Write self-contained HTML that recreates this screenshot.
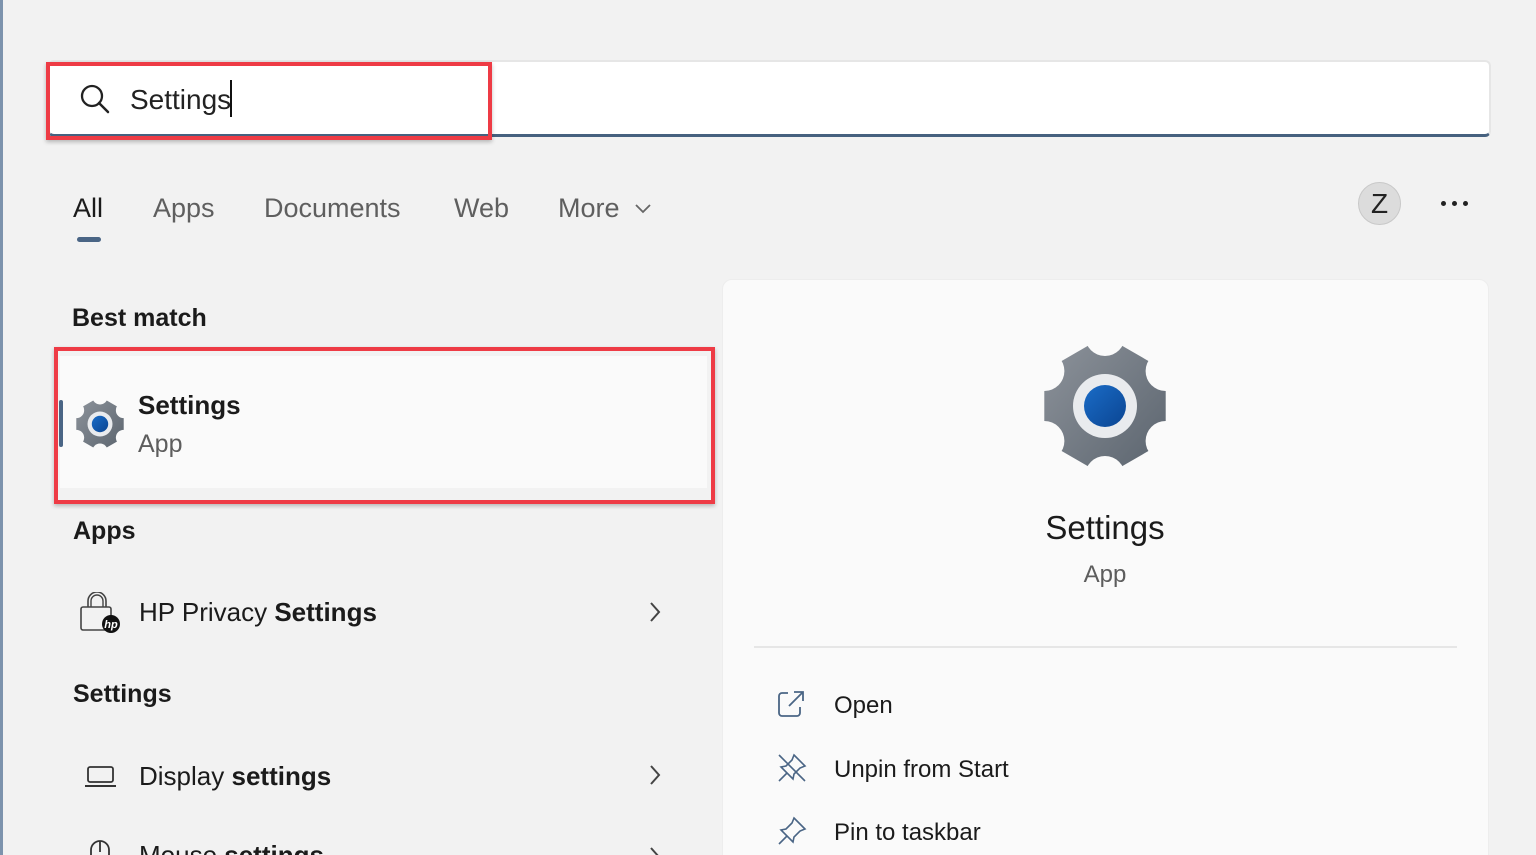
<!DOCTYPE html>
<html style="width:1536px;height:855px;overflow:hidden"><head><meta charset="utf-8"><style>
*{margin:0;padding:0;box-sizing:border-box}
body{width:1536px;height:855px;overflow:hidden;background:#f2f2f2;font-family:"Liberation Sans",sans-serif;color:#1b1b1b;position:relative}
.a{position:absolute;white-space:nowrap;line-height:1}
.b{font-weight:bold}
.g{color:#5d5d5d}
</style></head><body>
<div class="a" style="left:0;top:0;width:3px;height:855px;background:#7d93ad"></div>
<div class="a" style="left:48px;top:60px;width:1443px;height:77px;background:#fff;border:2px solid #e6e6e6;border-bottom:3px solid #46617f;border-radius:6px"></div>
<div class="a" style="left:46px;top:62px;width:446px;height:78px;border:4px solid #ee3b45;box-shadow:0 2px 4px rgba(0,0,0,.25)"></div>
<svg class="a" style="left:78px;top:82px" width="34" height="34" viewBox="0 0 34 34"><circle cx="14" cy="14" r="10" fill="none" stroke="#222" stroke-width="2.3"/><line x1="21" y1="21" x2="30" y2="30" stroke="#222" stroke-width="2.5" stroke-linecap="round"/></svg>
<div class="a" style="left:130px;top:86px;font-size:28px;color:#222">Settings</div>
<div class="a" style="left:230px;top:80px;width:2px;height:37px;background:#111"></div>
<div class="a" style="left:73px;top:195px;font-size:27px;color:#1b1b1b">All</div>
<div class="a" style="left:153px;top:195px;font-size:27px;color:#5f5f5f">Apps</div>
<div class="a" style="left:264px;top:195px;font-size:27px;color:#5f5f5f">Documents</div>
<div class="a" style="left:454px;top:195px;font-size:27px;color:#5f5f5f">Web</div>
<div class="a" style="left:558px;top:195px;font-size:27px;color:#5f5f5f">More</div>
<svg class="a" style="left:634px;top:202px" width="18" height="12"><polyline points="2,3 9,10 16,3" fill="none" stroke="#666" stroke-width="1.8"/></svg>
<div class="a" style="left:77px;top:237px;width:24px;height:5px;border-radius:3px;background:#4a6585"></div>
<div class="a" style="left:1358px;top:182px;width:43px;height:43px;border-radius:50%;background:#dcdcdc;border:1px solid #c8c8c8;font-size:28px;text-align:center;line-height:41px;color:#222">Z</div>
<div class="a" style="left:1441px;top:201px;width:28px;height:6px">
<span style="position:absolute;left:0;top:0;width:5px;height:5px;border-radius:50%;background:#222"></span>
<span style="position:absolute;left:11px;top:0;width:5px;height:5px;border-radius:50%;background:#222"></span>
<span style="position:absolute;left:22px;top:0;width:5px;height:5px;border-radius:50%;background:#222"></span></div>
<div class="a b" style="left:72px;top:306px;font-size:25px">Best match</div>
<div class="a" style="left:60px;top:356px;width:647px;height:132px;background:#fafafa"></div>
<div class="a" style="left:59px;top:400px;width:4px;height:47px;background:#4a6585;border-radius:2px"></div>
<svg class="a" style="left:75px;top:399px" width="50" height="50" viewBox="-64 -64 128 128">
<defs><mask id="m1"><rect x="-70" y="-70" width="140" height="140" fill="#fff"/>
<circle cx="0" cy="-70" r="20" fill="#000"/><circle cx="60.6" cy="-35" r="20" fill="#000"/><circle cx="60.6" cy="35" r="20" fill="#000"/><circle cx="0" cy="70" r="20" fill="#000"/><circle cx="-60.6" cy="35" r="20" fill="#000"/><circle cx="-60.6" cy="-35" r="20" fill="#000"/></mask>
<linearGradient id="gg" x1="0" y1="0" x2="1" y2="1"><stop offset="0" stop-color="#8b9199"/><stop offset="1" stop-color="#5d6670"/></linearGradient>
<linearGradient id="bb" x1="0" y1="0" x2="1" y2="1"><stop offset="0" stop-color="#1a6cc7"/><stop offset="1" stop-color="#0b4592"/></linearGradient></defs>
<path d="M0,-62 L53.7,-31 L53.7,31 L0,62 L-53.7,31 L-53.7,-31Z" fill="url(#gg)" stroke="url(#gg)" stroke-width="14" stroke-linejoin="round" mask="url(#m1)"/>
<circle r="32" fill="#e9ebee"/><circle r="21" fill="url(#bb)"/></svg>
<div class="a b" style="left:138px;top:392px;font-size:26px">Settings</div>
<div class="a g" style="left:138px;top:432px;font-size:25px">App</div>
<div class="a" style="left:54px;top:347px;width:661px;height:157px;border:4px solid #ee3b45;box-shadow:0 2px 4px rgba(0,0,0,.25)"></div>
<div class="a b" style="left:73px;top:519px;font-size:25px">Apps</div>
<svg class="a" style="left:78px;top:592px" width="44" height="42" viewBox="0 0 44 42"><path d="M10 15 V9 a9 9 0 0 1 18 0 V15" fill="none" stroke="#444" stroke-width="1.6"/><path d="M13 15 V9 a6 6 0 0 1 12 0 V15" fill="none" stroke="#444" stroke-width="1.4"/><rect x="3" y="15" width="30" height="23" rx="2" fill="none" stroke="#444" stroke-width="1.6"/><circle cx="33" cy="32" r="9" fill="#111"/><text x="33" y="36" font-size="11" font-style="italic" font-weight="bold" fill="#fff" text-anchor="middle" font-family="Liberation Sans">hp</text></svg>
<div class="a" style="left:139px;top:599px;font-size:26px">HP Privacy <b>Settings</b></div>
<svg class="a" style="left:648px;top:601px" width="14" height="22"><polyline points="3,2 11,11 3,20" fill="none" stroke="#444" stroke-width="2"/></svg>
<div class="a b" style="left:73px;top:682px;font-size:25px">Settings</div>
<svg class="a" style="left:84px;top:765px" width="34" height="24"><rect x="4" y="2" width="25" height="15" rx="2" fill="none" stroke="#333" stroke-width="1.8"/><line x1="1" y1="21" x2="32" y2="21" stroke="#333" stroke-width="2"/></svg>
<div class="a" style="left:139px;top:763px;font-size:26px">Display <b>settings</b></div>
<svg class="a" style="left:648px;top:764px" width="14" height="22"><polyline points="3,2 11,11 3,20" fill="none" stroke="#444" stroke-width="2"/></svg>
<svg class="a" style="left:88px;top:840px" width="24" height="20"><path d="M3 20 V10 a9 9 0 0 1 18 0 V20" fill="none" stroke="#333" stroke-width="1.8"/><line x1="12" y1="1" x2="12" y2="12" stroke="#333" stroke-width="1.8"/></svg>
<div class="a" style="left:139px;top:842px;font-size:26px">Mouse <b>settings</b></div>
<svg class="a" style="left:648px;top:846px" width="14" height="22"><polyline points="3,2 11,11 3,20" fill="none" stroke="#444" stroke-width="2"/></svg>
<div class="a" style="left:722px;top:279px;width:767px;height:600px;background:#fafafa;border-radius:10px;border:1px solid #ededed"></div>
<svg class="a" style="left:1041px;top:342px" width="128" height="128" viewBox="-64 -64 128 128">
<defs><mask id="m2"><rect x="-70" y="-70" width="140" height="140" fill="#fff"/>
<circle cx="0" cy="-70" r="20" fill="#000"/><circle cx="60.6" cy="-35" r="20" fill="#000"/><circle cx="60.6" cy="35" r="20" fill="#000"/><circle cx="0" cy="70" r="20" fill="#000"/><circle cx="-60.6" cy="35" r="20" fill="#000"/><circle cx="-60.6" cy="-35" r="20" fill="#000"/></mask></defs>
<path d="M0,-62 L53.7,-31 L53.7,31 L0,62 L-53.7,31 L-53.7,-31Z" fill="url(#gg)" stroke="url(#gg)" stroke-width="14" stroke-linejoin="round" mask="url(#m2)"/>
<circle r="32" fill="#e9ebee"/><circle r="21" fill="url(#bb)"/></svg>
<div class="a" style="left:905px;top:511px;width:400px;text-align:center;font-size:33px">Settings</div>
<div class="a g" style="left:905px;top:563px;width:400px;text-align:center;font-size:24px">App</div>
<div class="a" style="left:754px;top:646px;width:703px;height:2px;background:#e6e6e6"></div>
<svg class="a" style="left:776px;top:689px" width="30" height="30" viewBox="0 0 30 30"><path d="M12 4 H6 a3 3 0 0 0 -3 3 V24 a3 3 0 0 0 3 3 H21 a3 3 0 0 0 3 -3 V18" fill="none" stroke="#4a6585" stroke-width="1.8"/><path d="M18 3 H27 V12 M27 3 L13 17" fill="none" stroke="#4a6585" stroke-width="1.8"/></svg>
<div class="a" style="left:834px;top:694px;font-size:24px">Open</div>
<svg class="a" style="left:776px;top:752px" width="32" height="32" viewBox="0 0 32 32"><path d="M18 3 L29 14 L24 16 L18 22 L17 27 L5 15 L10 14 L16 8Z" fill="none" stroke="#4a6585" stroke-width="1.6"/><line x1="3" y1="29" x2="11" y2="21" stroke="#4a6585" stroke-width="1.6"/><line x1="3" y1="3" x2="29" y2="29" stroke="#4a6585" stroke-width="1.6"/></svg>
<div class="a" style="left:834px;top:758px;font-size:24px">Unpin from Start</div>
<svg class="a" style="left:776px;top:815px" width="32" height="32" viewBox="0 0 32 32"><path d="M18 3 L29 14 L24 16 L18 22 L17 27 L5 15 L10 14 L16 8Z" fill="none" stroke="#4a6585" stroke-width="1.6"/><line x1="3" y1="29" x2="11" y2="21" stroke="#4a6585" stroke-width="1.6"/></svg>
<div class="a" style="left:834px;top:821px;font-size:24px">Pin to taskbar</div>
</body></html>
